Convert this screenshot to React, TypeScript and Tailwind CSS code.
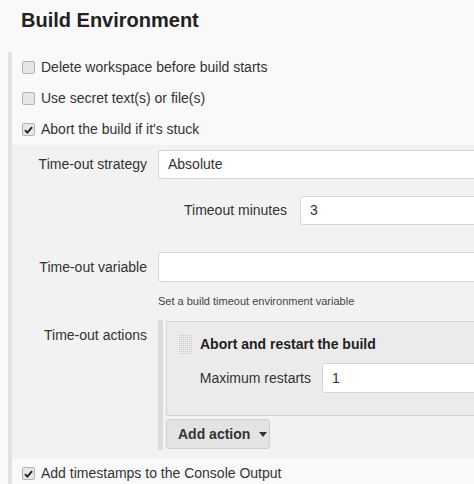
import React from "react";

function Check({ checked }: { checked?: boolean }) {
  return (
    <span className="flex h-[13px] w-[13px] shrink-0 items-center justify-center rounded-[2px] border border-[#b3b3b3] bg-[#e6e6e6]">
      {checked && (
        <svg width="9" height="8" viewBox="0 0 9 8">
          <path d="M1 4.2 L3.4 6.6 L8 1.2" stroke="#222" strokeWidth="1.9" fill="none" />
        </svg>
      )}
    </span>
  );
}

function CheckRow({ label, checked }: { label: string; checked?: boolean }) {
  return (
    <div className="flex h-[31px] items-center gap-[6px] pl-[10px]">
      <Check checked={checked} />
      <span>{label}</span>
    </div>
  );
}

function TextBox({ value, className }: { value?: string; className?: string }) {
  return (
    <div
      className={
        "flex flex-1 items-center rounded-[3px] border border-[#d4d4d4] bg-white px-[9px] " + (className ?? "h-[30px]")
      }
    >
      {value}
    </div>
  );
}

function Handle() {
  return (
    <svg width="13" height="19" viewBox="0 0 13 19" className="shrink-0">
      <defs>
        <pattern id="dots" width="2" height="2" patternUnits="userSpaceOnUse">
          <rect width="1" height="1" fill="#c9c9c9" />
        </pattern>
      </defs>
      <rect width="13" height="19" fill="url(#dots)" />
    </svg>
  );
}

export default function App() {
  return (
    <div
      className="h-[484px] w-[474px] overflow-hidden bg-[#f9f9f9] text-[14px] text-[#333]"
      style={{ fontFamily: '"Liberation Sans", Arial, sans-serif' }}
    >
      <h2 className="h-[52px] pl-[21px] pt-[7px] text-[20px] font-bold leading-[26px] text-[#222]">
        Build Environment
      </h2>

      <div className="ml-[8px] w-[560px] border-l-4 border-[#e2e2e2] pb-[20px]">
        <CheckRow label="Delete workspace before build starts" />
        <CheckRow label="Use secret text(s) or file(s)" />
        <CheckRow label="Abort the build if it's stuck" checked />

        <div className="bg-[#f2f2f2] pb-[8px] pt-[5px]">
          <div className="flex items-center gap-[11px]">
            <div className="w-[135px] text-right">Time-out strategy</div>
            <TextBox value="Absolute" className="h-[29px]" />
          </div>

          <div className="mt-[17px] flex items-center gap-[13px] pl-[146px]">
            <div className="w-[129px] text-right">Timeout minutes</div>
            <TextBox value="3" className="h-[29px]" />
          </div>

          <div className="mt-[27px] flex items-center gap-[11px]">
            <div className="w-[135px] text-right">Time-out variable</div>
            <TextBox />
          </div>

          <div className="mt-[11px] pl-[146px] text-[11px] leading-[16px] text-[#444]">
            Set a build timeout environment variable
          </div>

          <div className="mt-[11px] flex items-start gap-[11px]">
            <div className="w-[135px] pt-[5px] text-right">Time-out actions</div>
            <div className="flex-1 border-l-[5px] border-[#dcdcdc] pb-[1px] pl-[3px]">
              <div className="mt-[1px] border border-[#d5d5d5] bg-[#ebebeb] pb-[22px]">
                <div className="mt-[10px] flex h-[24px] items-center gap-[8px] pl-[12px]">
                  <Handle />
                  <span className="font-bold text-[#222]">Abort and restart the build</span>
                </div>
                <div className="mt-[7px] flex items-center gap-[11px]">
                  <div className="w-[144px] text-right">Maximum restarts</div>
                  <TextBox value="1" />
                </div>
              </div>
              <button className="mt-[3px] flex h-[30px] w-[104px] items-center gap-[9px] rounded-[3px] border border-[#d0d0d0] bg-[#e3e3e3] pl-[11px] font-bold text-[#333]">
                Add action
                <svg width="8" height="5" viewBox="0 0 8 5">
                  <path d="M0 0 H8 L4 5 Z" fill="#333" />
                </svg>
              </button>
            </div>
          </div>
        </div>

        <CheckRow label="Add timestamps to the Console Output" checked />
      </div>
    </div>
  );
}
